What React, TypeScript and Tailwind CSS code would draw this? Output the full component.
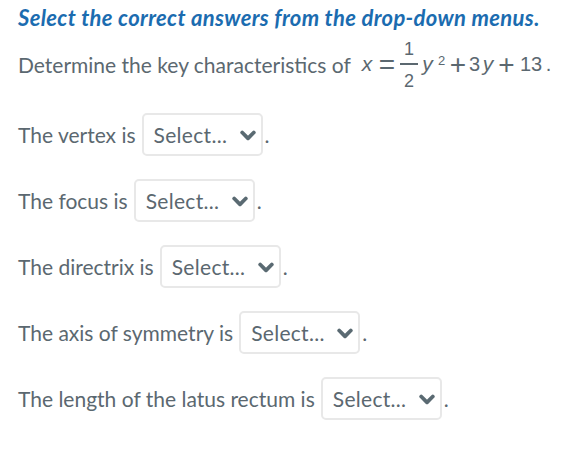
import React from "react";

const rows = [
  "The vertex is",
  "The focus is",
  "The directrix is",
  "The axis of symmetry is",
  "The length of the latus rectum is",
];

function Dropdown() {
  return (
    <div className="flex h-[43px] w-[121px] items-center justify-between rounded-[5px] border-2 border-[#e8e8e8] bg-white pl-[10px] pr-[5px]">
      <span className="tracking-[0.3px]">Select...</span>
      <svg width="16" height="11" viewBox="0 0 16 11" className="mt-[2px]">
        <path d="M2.2 2.5 L8 8.3 L13.8 2.5" fill="none" stroke="#5a6a72" strokeWidth="3.8" strokeLinecap="round" strokeLinejoin="round" />
      </svg>
    </div>
  );
}

export default function App() {
  return (
    <main
      className="min-h-screen bg-white pl-[18px] pt-[4px] text-[21px] text-[#5b6870]"
      style={{ fontFamily: "Lato, 'Noto Sans', sans-serif" }}
    >
      {/* heading */}
      <h1 className="text-[22px] font-bold italic leading-[28px] tracking-[0.35px] text-[#1b6cb0]">
        Select the correct answers from the drop-down menus.
      </h1>

      {/* equation */}
      <div className="mt-[8px] flex items-center">
        <span className="w-[343px] whitespace-nowrap">Determine the key characteristics of</span>
        <div
          className="flex items-start whitespace-nowrap"
          style={{ fontFamily: "'Liberation Sans', Arial, sans-serif" }}
        >
          <span className="ml-[1px] flex h-[48px] w-[10px] justify-center text-[21px] italic leading-[48px]">x</span>
          <span className="ml-[8px] flex h-[48px] w-[14px] justify-center text-[28px] leading-[49px]">=</span>
          <span className="ml-[6px] flex w-[18px] flex-col items-center text-[18px] leading-[18px]">
            <span>1</span>
            <span className="mb-[7px] mt-[5px] h-[2px] w-[18px] bg-[#5b6870]" />
            <span>2</span>
          </span>
          <span className="ml-[2px] flex h-[48px] w-[15px] justify-center text-[21px] italic leading-[48px]">y</span>
          <span className="ml-[3px] flex h-[48px] w-[7px] justify-center text-[13px] leading-[41px]">2</span>
          <span className="ml-[6px] flex h-[48px] w-[14px] justify-center text-[28px] leading-[50px]">+</span>
          <span className="ml-[5px] flex h-[48px] w-[9px] justify-center pt-[12px] text-[20px] leading-[24px]">3</span>
          <span className="ml-[3px] flex h-[48px] w-[12px] justify-center text-[21px] italic leading-[48px]">y</span>
          <span className="ml-[5px] flex h-[48px] w-[15px] justify-center text-[28px] leading-[50px]">+</span>
          <span className="ml-[6px] flex h-[48px] w-[22px] justify-center pt-[12px] text-[20px] leading-[24px]">13</span>
          <span className="ml-[5px] flex h-[48px] w-[3px] justify-center pt-[12px] text-[20px] leading-[24px]">.</span>
        </div>
      </div>

      {/* questions */}
      <div className="mt-[23px] flex flex-col gap-[23px]">
        {rows.map((label) => (
          <div key={label} className="flex items-center">
            <span className="mr-[6px]">{label}</span>
            <Dropdown />
            <span className="ml-[2px]">.</span>
          </div>
        ))}
      </div>
    </main>
  );
}
